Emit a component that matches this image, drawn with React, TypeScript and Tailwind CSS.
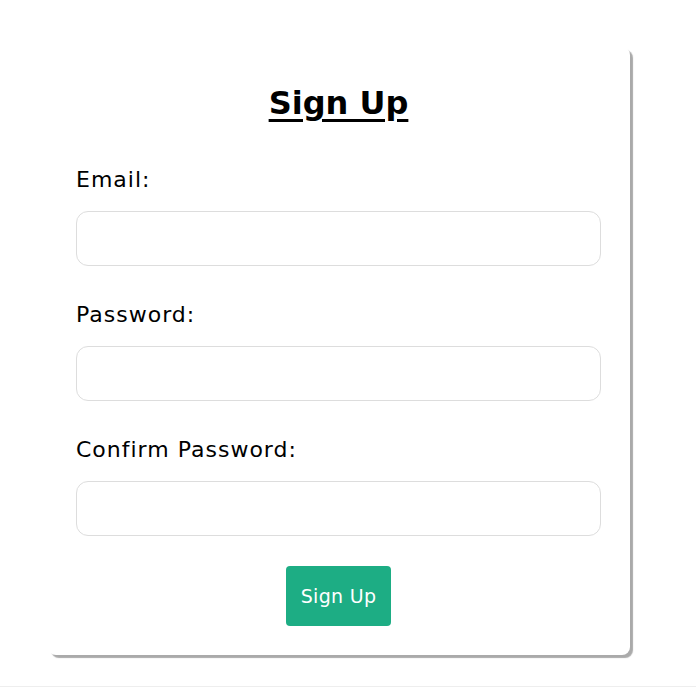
import React, { useState } from 'react';

const fields = [
  { id: 'email', label: 'Email:', type: 'email' },
  { id: 'password', label: 'Password:', type: 'password' },
  { id: 'confirm', label: 'Confirm Password:', type: 'password' },
];

export default function App() {
  const [values, setValues] = useState<Record<string, string>>({});

  return (
    <div className="min-h-[688px] bg-white font-['DejaVu_Sans',sans-serif] text-black">
      <div className="pl-[48px] pt-[47px]">
        <form
          onSubmit={(e) => e.preventDefault()}
          className="w-[582px] h-[608px] bg-white rounded-lg shadow-[3px_3px_1px_#aaaaaa] pl-[28px] pr-[29px] pt-[32px]"
        >
          <h1 className="text-center text-[32px] leading-[48px] font-bold underline underline-offset-[5px] decoration-[3px]">
            Sign Up
          </h1>

          <div className="mt-[38px] flex flex-col gap-[34px]">
            {fields.map((f) => (
              <div key={f.id} className="flex flex-col">
                <label htmlFor={f.id} className="text-[22px] leading-[30px] tracking-[1px] mb-[16px]">
                  {f.label}
                </label>
                <input
                  id={f.id}
                  type={f.type}
                  value={values[f.id] || ''}
                  onChange={(e) => setValues({ ...values, [f.id]: e.target.value })}
                  className="w-full h-[55px] rounded-xl border border-[#dddddd] px-4 outline-none"
                />
              </div>
            ))}
          </div>

          <div className="mt-[30px] flex justify-center">
            <button
              type="submit"
              className="w-[105px] h-[60px] rounded bg-[#1dad84] text-white text-[19px] tracking-[0.3px]"
            >
              Sign Up
            </button>
          </div>
        </form>
      </div>
      <div className="mt-[31px] border-t border-[#eeeeee]" />
    </div>
  );
}
